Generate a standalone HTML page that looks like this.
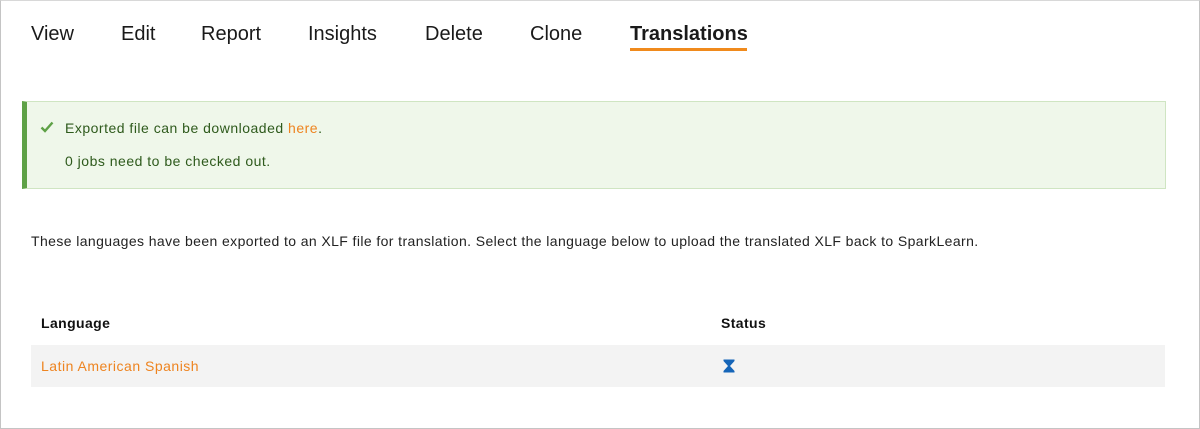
<!DOCTYPE html>
<html><head><style>
*{margin:0;padding:0;box-sizing:border-box}
body{width:1200px;height:429px;background:#fff;font-family:"Liberation Sans",sans-serif;position:relative;overflow:hidden}
.frame{position:absolute;left:0;top:0;width:1200px;height:429px;border:1px solid #c4c4c4;border-top:1px solid #d8d8d8}
.tab{position:absolute;top:22px;font-size:20px;color:#1a1a1a;line-height:24px}
.act{font-weight:bold}
.ul{position:absolute;left:630px;top:48px;width:117px;height:3px;background:#f08a1c}
.alert{position:absolute;left:22px;top:101px;width:1144px;height:88px;background:#eff7ea;border:1px solid #cfe5c2;border-left:5px solid #5ea146}
.t{position:absolute;font-size:14px;color:#2e5a1c;line-height:16px;letter-spacing:.5px}
.o{color:#ee8420}
.p{position:absolute;left:31px;top:233px;font-size:14px;color:#222;line-height:16px;letter-spacing:.4px}
.th{position:absolute;top:315px;font-size:14px;font-weight:bold;color:#111;letter-spacing:.4px}
.row{position:absolute;left:31px;top:345px;width:1134px;height:42px;background:#f3f3f3}
</style></head><body>
<div class="frame"></div>
<div class="tab" style="left:31px">View</div>
<div class="tab" style="left:121px">Edit</div>
<div class="tab" style="left:201px">Report</div>
<div class="tab" style="left:308px">Insights</div>
<div class="tab" style="left:425px">Delete</div>
<div class="tab" style="left:530px">Clone</div>
<div class="tab act" style="left:630px">Translations</div>
<div class="ul"></div>
<div class="alert"></div>
<svg style="position:absolute;left:40px;top:121px" width="14" height="12" viewBox="0 0 14 12"><path d="M1.5 6.5 L5 10 L12.5 1.5" stroke="#5ea146" stroke-width="2.4" fill="none"/></svg>
<div class="t" style="left:65px;top:120px">Exported file can be downloaded <span class="o">here</span>.</div>
<div class="t" style="left:65px;top:153px">0 jobs need to be checked out.</div>
<div class="p">These languages have been exported to an XLF file for translation. Select the language below to upload the translated XLF back to SparkLearn.</div>
<div class="th" style="left:41px">Language</div>
<div class="th" style="left:721px">Status</div>
<div class="row"></div>
<div class="t o" style="left:41px;top:358px">Latin American Spanish</div>
<svg style="position:absolute;left:723px;top:359px" width="12" height="14" viewBox="0 0 12 14"><path d="M0.5 0.5 H11.5 V2 L7 7 L11.5 12 V13.5 H0.5 V12 L5 7 L0.5 2 Z" fill="#1565b8"/></svg>
</body></html>
